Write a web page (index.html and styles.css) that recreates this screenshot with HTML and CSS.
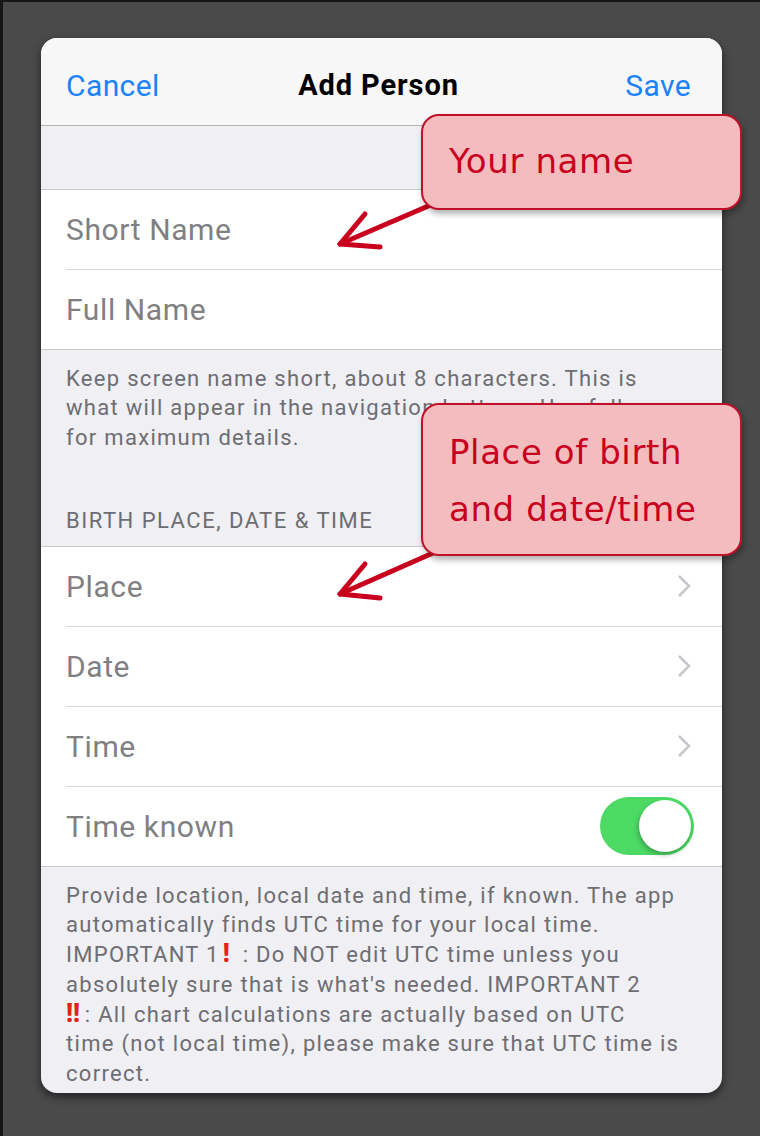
FILE: index.html
```html
<!DOCTYPE html>
<html lang="en">
<head>
    <meta charset="UTF-8">
    <meta name="viewport" content="width=device-width, initial-scale=1.0">
    <title>Add Person</title>
    <link rel="stylesheet" href="styles.css">
</head>
<body>
    <div class="screen">
        <div class="sheet">
            <div class="navbar">
                <span class="nav-btn">Cancel</span>
                <span class="nav-title">Add Person</span>
                <span class="nav-btn nav-right">Save</span>
            </div>

            <div class="spacer"></div>

            <div class="group">
                <div class="row"><span class="label">Short Name</span></div>
                <div class="row"><span class="label">Full Name</span></div>
            </div>
            <p class="footer">Keep screen name short, about 8 characters. This is<br>what will appear in the navigation buttons. Use full name<br>for maximum details.</p>

            <div class="header">BIRTH PLACE, DATE &amp; TIME</div>
            <div class="group">
                <div class="row">
                    <span class="label">Place</span>
                    <svg class="chevron" viewBox="0 0 14 24"><polyline points="2,2 12,12 2,22"/></svg>
                </div>
                <div class="row">
                    <span class="label">Date</span>
                    <svg class="chevron" viewBox="0 0 14 24"><polyline points="2,2 12,12 2,22"/></svg>
                </div>
                <div class="row">
                    <span class="label">Time</span>
                    <svg class="chevron" viewBox="0 0 14 24"><polyline points="2,2 12,12 2,22"/></svg>
                </div>
                <div class="row">
                    <span class="label">Time known</span>
                    <span class="switch"><span class="knob"></span></span>
                </div>
            </div>
            <p class="footer">Provide location, local date and time, if known. The app<br>automatically finds UTC time for your local time.<br>IMPORTANT 1<span class="bang">!</span> : Do NOT edit UTC time unless you<br>absolutely sure that is what's needed. IMPORTANT 2<br><span class="bang bang-first">!!</span>: All chart calculations are actually based on UTC<br>time (not local time), please make sure that UTC time is<br>correct.</p>
        </div>

        <!-- annotation arrows + callouts -->
        <svg class="arrows" viewBox="0 0 760 1136">
            <g>
                <line x1="430" y1="202" x2="337" y2="242"/>
                <polyline points="362,212 337,242 377,245"/>
            </g>
            <g>
                <line x1="430" y1="551" x2="337" y2="592"/>
                <polyline points="362,562 337,592 377,596"/>
            </g>
        </svg>
        <div class="callout callout-name">Your name</div>
        <div class="callout callout-birth">Place of birth<br>and date/time</div>
    </div>
</body>
</html>
```

FILE: styles.css
```css
body {
    margin: 0;
    background: #4a4a4a;
    font-family: Roboto, "Liberation Sans", sans-serif;
}

.screen {
    position: relative;
    height: 1136px;
    box-sizing: border-box;
    border-top: 2px solid #161616;
    border-left: 3px solid #161616;
    padding: 36px 0 0 38px;
    overflow: hidden;
}

.sheet {
    width: 681px;
    height: 1055px;
    background: #efeff4;
    border-radius: 16px;
    overflow: hidden;
    box-shadow: 0 4px 8px rgba(0,0,0,0.55);
}

.navbar {
    height: 88px;
    box-sizing: border-box;
    background: #f7f7f8;
    border-bottom: 1px solid #b4b4b8;
    display: grid;
    grid-template-columns: 1fr auto 1fr;
    align-items: center;
    padding: 7px 31px 0 25px;
}

.nav-btn {
    color: #1b82f9;
    font-size: 30px;
    letter-spacing: 0.4px;
}

.nav-right {
    justify-self: end;
}

.nav-title {
    font-size: 29px;
    font-weight: 700;
    letter-spacing: 0.9px;
    color: #000;
}

.spacer {
    height: 63px;
}

.group {
    background: #fff;
    border-top: 1px solid #c8c7cc;
    border-bottom: 1px solid #c8c7cc;
    padding-left: 25px;
}

.row {
    height: 79px;
    display: flex;
    align-items: center;
    justify-content: space-between;
    padding-right: 28px;
    border-bottom: 1px solid #d6d6da;
}

.row:last-child {
    border-bottom: none;
}

.label {
    font-size: 30px;
    letter-spacing: 0.6px;
    color: #808083;
}

.chevron {
    width: 14px;
    height: 24px;
    fill: none;
    stroke: #c7c7cc;
    stroke-width: 2.6;
    margin-right: 3px;
}

.switch {
    position: relative;
    width: 94px;
    height: 58px;
    border-radius: 29px;
    background: #4cd964;
}

.knob {
    position: absolute;
    top: 3px;
    right: 3px;
    width: 52px;
    height: 52px;
    border-radius: 50%;
    background: #fff;
    box-shadow: -1px 3px 5px rgba(0,0,0,0.25);
}

.footer {
    margin: 0;
    padding: 14px 0 0 25px;
    font-size: 22px;
    letter-spacing: 1.3px;
    line-height: 29.3px;
    color: #6d6d72;
    white-space: nowrap;
}

.bang {
    color: #e3201c;
    font-weight: 900;
    font-size: 25px;
    margin: 0 5px 0 3px;
}

.bang-first {
    margin-left: 0;
    letter-spacing: 0;
}

.header {
    margin-top: 54px;
    padding: 0 25px 11px;
    font-size: 22px;
    letter-spacing: 1.5px;
    line-height: 29px;
    color: #6d6d72;
}

.arrows {
    position: absolute;
    left: 0;
    top: 0;
    width: 760px;
    height: 1136px;
    fill: none;
    stroke: #c8001e;
    stroke-width: 5;
    stroke-linecap: round;
    stroke-linejoin: round;
    pointer-events: none;
}

.callout {
    position: absolute;
    left: 418px;
    width: 321px;
    box-sizing: border-box;
    padding-left: 26px;
    background: #f3bdbf;
    border: 2px solid #c0102a;
    border-radius: 18px;
    box-shadow: 2px 4px 6px rgba(0,0,0,0.3);
    color: #c8001e;
    font-family: "DejaVu Sans", sans-serif;
    font-size: 34px;
    letter-spacing: 0.6px;
    line-height: 57px;
}

.callout-name {
    top: 112px;
    height: 96px;
    padding-top: 17px;
}

.callout-birth {
    top: 401px;
    height: 153px;
    padding-top: 19px;
}
```
